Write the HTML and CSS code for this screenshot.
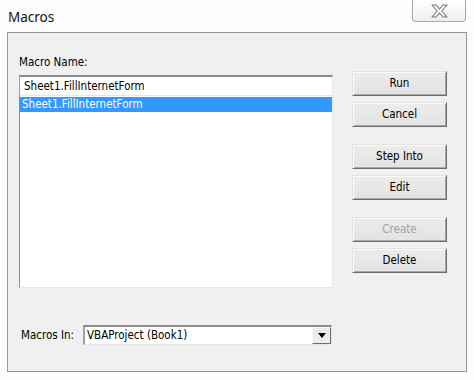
FILE: index.html
```html
<!DOCTYPE html>
<html lang="en">
<head>
  <meta charset="UTF-8" />
  <title>Macros</title>
  <link rel="stylesheet" href="styles.css">
</head>
<body>
  <div class="window">
    <div class="titlebar">
      <span class="title">Macros</span>
      <div class="close-btn">
        <svg width="17" height="14" viewBox="0 0 17 14">
          <polygon points="1,1 5,1 8.5,4.8 12,1 16,1 10.8,7 16,13 12,13 8.5,9.2 5,13 1,13 6.2,7" fill="#fafafa" stroke="#777" stroke-width="1.1" stroke-linejoin="round"/>
        </svg>
      </div>
    </div>

    <div class="panel">
      <div class="main">
        <div class="left-col">
          <div class="label">Macro Name:</div>
          <div class="name-box">Sheet1.FillInternetForm</div>
          <div class="macro-list">
            <div class="list-item selected">Sheet1.FillInternetForm</div>
          </div>
        </div>

        <div class="buttons">
          <div class="btn-group">
            <div class="btn">Run</div>
            <div class="btn">Cancel</div>
          </div>
          <div class="btn-group">
            <div class="btn">Step Into</div>
            <div class="btn">Edit</div>
          </div>
          <div class="btn-group">
            <div class="btn disabled">Create</div>
            <div class="btn">Delete</div>
          </div>
        </div>
      </div>

      <div class="macros-in">
        <div class="label in-label">Macros In:</div>
        <div class="combo">
          <div class="combo-text">VBAProject (Book1)</div>
          <div class="combo-btn">
            <svg width="8" height="5" viewBox="0 0 8 5"><polygon points="0,0 8,0 4,5" fill="#000"/></svg>
          </div>
        </div>
      </div>
    </div>
  </div>
</body>
</html>
```

FILE: styles.css
```css
body {
  margin: 0;
  background-color: #fdfdfe;
  font-family: "DejaVu Sans Condensed", "DejaVu Sans", sans-serif;
  font-size: 11.5px;
  color: #000;
}

.window {
  width: 474px;
  height: 380px;
  box-sizing: border-box;
}

.titlebar {
  display: flex;
  justify-content: space-between;
  height: 32px;
  padding: 0 8px 0 8px;
}
.title {
  font-family: "Noto Sans", sans-serif;
  font-size: 13.5px;
  line-height: 20px;
  padding-top: 7px;
  color: #111;
}
.close-btn {
  width: 54px;
  height: 22px;
  box-sizing: border-box;
  border: 1px solid #a9a9a9;
  border-top: none;
  border-radius: 0 0 4px 4px;
  background: linear-gradient(#ffffff, #eeeeee);
  display: flex;
  align-items: center;
  justify-content: center;
}

.panel {
  margin-left: 7px;
  width: 460px;
  height: 340px;
  box-sizing: border-box;
  border: 1px solid #959595;
  background-color: #f0f0f0;
  padding: 22px 19px 0 11px;
}

.main {
  display: flex;
  gap: 19px;
}

.left-col {
  width: 314px;
}
.label {
  line-height: 14px;
  margin-bottom: 6px;
}
.name-box {
  height: 21px;
  box-sizing: border-box;
  background: #fff;
  border-style: solid;
  border-width: 2px 1px 1px 1px;
  border-color: #8c8c8c #e6e6e6 #e6e6e6 #a0a0a0;
  padding-left: 4px;
  line-height: 18px;
}
.macro-list {
  height: 192px;
  box-sizing: border-box;
  background: #fff;
  border-style: solid;
  border-width: 0 1px 1px 1px;
  border-color: #fff #e6e6e6 #e6e6e6 #8c8c8c;
  padding-top: 1px;
}
.list-item {
  height: 15px;
  line-height: 15px;
  padding-left: 2px;
}
.list-item.selected {
  background-color: #3399ff;
  color: #fff;
}

.buttons {
  width: 95px;
  padding-top: 16px;
  display: flex;
  flex-direction: column;
  gap: 17px;
}
.btn-group {
  display: flex;
  flex-direction: column;
  gap: 6px;
}
.btn {
  height: 25px;
  box-sizing: border-box;
  border: 1px solid;
  border-color: #e2e2e2 #6c6c6c #6c6c6c #e2e2e2;
  box-shadow: inset 1px 1px #fbfbfb, inset -1px -1px #a8a8a8;
  background: linear-gradient(#ececec, #e3e3e3);
  text-align: center;
  line-height: 22px;
}
.btn.disabled {
  color: #a3a3a3;
}

.macros-in {
  display: flex;
  align-items: center;
  margin-top: 37px;
}
.in-label {
  width: 62px;
  padding-left: 2px;
  margin-bottom: 0;
}
.combo {
  width: 249px;
  height: 20px;
  box-sizing: border-box;
  display: flex;
  background: #fff;
  border-style: solid;
  border-width: 2px 1px 1px 2px;
  border-color: #8c8c8c #e6e6e6 #e6e6e6 #a0a0a0;
}
.combo-text {
  flex: 1;
  padding-left: 2px;
  line-height: 17px;
}
.combo-btn {
  width: 19px;
  box-sizing: border-box;
  background: #ececec;
  border-style: solid;
  border-width: 1px;
  border-color: #fafafa #6c6c6c #6c6c6c #fafafa;
  display: flex;
  align-items: center;
  justify-content: center;
}
```
